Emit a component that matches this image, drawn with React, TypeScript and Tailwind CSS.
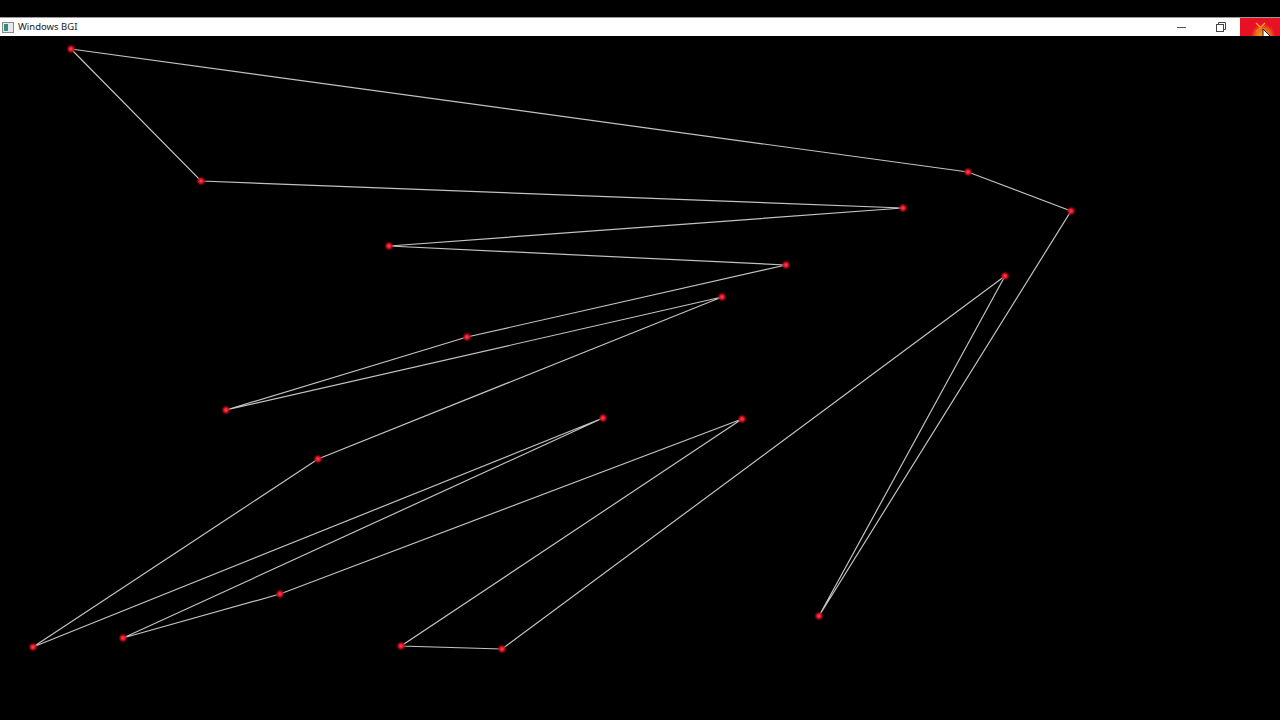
import React from "react";

const pts: [number, number][] = [
  [71, 49],
  [201, 181],
  [903, 208],
  [389, 246],
  [786, 265],
  [467, 337],
  [226, 410],
  [722, 297],
  [318, 459],
  [33, 647],
  [603, 418],
  [123, 638],
  [280, 594],
  [742, 419],
  [401, 646],
  [502, 649],
  [1005, 276],
  [819, 616],
  [1071, 211],
  [968, 172],
];

export default function App() {
  const poly = pts.map((p) => p.join(",")).join(" ");
  return (
    <div className="w-[1280px] h-[720px] bg-black flex flex-col overflow-hidden" style={{ fontFamily: '"Noto Sans", "Open Sans", sans-serif' }}>
      <div className="h-[17px] bg-black shrink-0" />
      <div className="h-[19px] bg-white shrink-0 flex items-center relative border-t border-[#9a9a9a]">
        <div className="ml-[2px] w-[12px] h-[11px] border border-[#8a8a8a] bg-[#e8e8e8] flex items-center pl-[1px]">
          <div className="w-[4px] h-[7px] bg-[#2f8f80]" />
        </div>
        <span className="ml-[4px] text-[9.5px] text-[#1a1a1a] leading-none">Windows BGI</span>
        <div className="ml-auto flex h-full items-stretch">
          <div className="w-[40px] flex items-center justify-center pr-[2px]">
            <div className="w-[9px] h-px bg-[#555]" />
          </div>
          <div className="w-[38px] flex items-center justify-center">
            <svg width="10" height="10" viewBox="0 0 10 10">
              <rect x="0.5" y="2.5" width="7" height="7" fill="none" stroke="#444" />
              <path d="M2.5 2.5V0.5H9.5V7.5H7.5" fill="none" stroke="#444" />
            </svg>
          </div>
          <div className="w-[40px] bg-[#e81123] flex items-center justify-center">
            <svg width="11" height="11" viewBox="0 0 11 11">
              <path d="M1 1L10 10M10 1L1 10" stroke="#f7b733" strokeWidth="1.2" />
            </svg>
          </div>
        </div>
        <div className="absolute left-[1251px] top-[6px] w-[24px] h-[24px] rounded-full bg-[radial-gradient(circle,#f9a825_0%,#e8731a_40%,rgba(232,17,35,0)_72%)]" />
        <svg className="absolute left-[1262px] top-[10px]" width="12" height="18" viewBox="0 0 12 18">
          <path d="M1 1V14L4 11L6.5 16.5L8.5 15.5L6 10H10Z" fill="#fff" stroke="#222" strokeWidth="1" />
        </svg>
      </div>
      <div className="flex-1 bg-black relative">
        <svg width="1280" height="684" viewBox="0 36 1280 684" className="block">
          <defs>
            <radialGradient id="dot">
              <stop offset="0%" stopColor="#ff4a58" />
              <stop offset="45%" stopColor="#d8101f" />
              <stop offset="100%" stopColor="#700008" stopOpacity="0" />
            </radialGradient>
          </defs>
          <polygon points={poly} fill="none" stroke="#c2c2c2" strokeWidth="1.2" />
          {pts.map(([x, y], i) => (
            <circle key={i} cx={x} cy={y} r="5" fill="url(#dot)" />
          ))}
        </svg>
      </div>
    </div>
  );
}
